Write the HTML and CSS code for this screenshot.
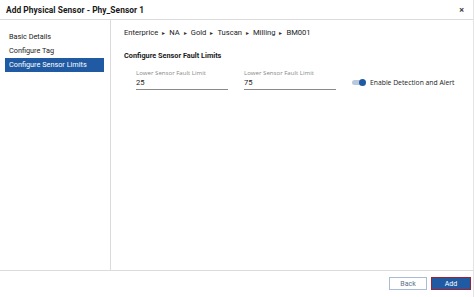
FILE: index.html
```html
<!DOCTYPE html>
<html>
<head>
<meta charset="utf-8">
<link rel="stylesheet" href="styles.css">
</head>
<body>
<div class="dialog">
  <div class="header">
    <span class="title">Add Physical Sensor - Phy_Sensor 1</span>
    <span class="close">×</span>
  </div>
  <div class="body">
    <div class="sidebar">
      <div class="nav-item">Basic Details</div>
      <div class="nav-item">Configure Tag</div>
      <div class="nav-item active">Configure Sensor Limits</div>
    </div>
    <div class="main">
      <div class="crumbs">
        <span>Enterprice</span><span class="arrow">▸</span>
        <span>NA</span><span class="arrow">▸</span>
        <span>Gold</span><span class="arrow">▸</span>
        <span>Tuscan</span><span class="arrow">▸</span>
        <span>Milling</span><span class="arrow">▸</span>
        <span>BM001</span>
      </div>
      <div class="section-title">Configure Sensor Fault Limits</div>
      <div class="fields">
        <div class="field">
          <div class="label">Lower Sensor Fault Limit</div>
          <div class="value">25</div>
        </div>
        <div class="field">
          <div class="label">Lower Sensor Fault Limit</div>
          <div class="value">75</div>
        </div>
        <div class="toggle-row">
          <span class="toggle"><span class="knob"></span></span>
          <span class="toggle-label">Enable Detection and Alert</span>
        </div>
      </div>
    </div>
  </div>
  <div class="footer">
    <button class="btn back">Back</button>
    <button class="btn add">Add</button>
  </div>
</div>
</body>
</html>
```
FILE: styles.css
```css
html, body {
  margin: 0;
  padding: 0;
  background: #fff;
}
.dialog {
  width: 474px;
  height: 297px;
  display: flex;
  flex-direction: column;
  font-family: Roboto, "Liberation Sans", sans-serif;
  color: #222;
  box-sizing: border-box;
  border-right: 1px solid #e4e4e4;
}
.header {
  height: 19px;
  border-bottom: 1px solid #dcdcdc;
  display: flex;
  align-items: center;
  justify-content: space-between;
  padding: 0 9px 0 6px;
  flex: none;
}
.title {
  font-size: 8.4px;
  font-weight: 700;
  color: #1a1a1a;
  letter-spacing: 0.05px;
}
.close {
  font-size: 9px;
  color: #444;
  font-weight: 700;
}
.body {
  flex: 1;
  display: flex;
  min-height: 0;
}
.sidebar {
  width: 105px;
  border-right: 1px solid #dadada;
  padding: 10px 0 0 5px;
  flex: none;
}
.nav-item {
  height: 14px;
  line-height: 14px;
  font-size: 7.3px;
  padding-left: 4px;
  width: 95px;
  color: #222;
}
.nav-item.active {
  background: #1f5aa3;
  color: #fff;
}
.main {
  flex: 1;
  padding: 7px 0 0 13px;
}
.crumbs {
  font-size: 7.6px;
  height: 12px;
  line-height: 12px;
  color: #222;
  display: flex;
  gap: 4px;
}
.arrow {
  font-size: 6px;
  color: #333;
}
.section-title {
  margin-top: 12px;
  font-size: 7.3px;
  font-weight: 700;
  color: #1a1a1a;
  line-height: 10px;
}
.fields {
  display: flex;
  align-items: flex-start;
  margin-top: 8px;
  padding-left: 12px;
}
.field {
  width: 92px;
  margin-right: 16px;
  border-bottom: 1px solid #8a8a8a;
  height: 20px;
}
.label {
  font-family: "Open Sans", sans-serif;
  font-size: 6.1px;
  color: #888;
  line-height: 8px;
}
.value {
  font-size: 7.6px;
  color: #222;
  line-height: 12px;
}
.toggle-row {
  display: flex;
  align-items: center;
  margin-top: 9px;
}
.toggle {
  position: relative;
  width: 13px;
  height: 5px;
  border-radius: 3px;
  background: #b9c9dd;
  display: inline-block;
}
.knob {
  position: absolute;
  right: -1px;
  top: -1px;
  width: 7px;
  height: 7px;
  border-radius: 50%;
  background: #1f5aa3;
}
.toggle-label {
  font-family: "Open Sans", sans-serif;
  font-size: 6.8px;
  color: #222;
  margin-left: 5px;
}
.footer {
  border-top: 1px solid #dcdcdc;
  display: flex;
  justify-content: flex-end;
  align-items: flex-start;
  padding: 6px 2px 0 0;
  gap: 4px;
  flex: none;
  box-sizing: border-box;
  height: 27px;
}
.btn {
  width: 38px;
  height: 13px;
  font-family: Roboto, sans-serif;
  font-size: 7px;
  padding: 0;
  border-radius: 0;
}
.back {
  background: #fff;
  border: 1px solid #a9bcd6;
  color: #5a6f8c;
}
.add {
  width: 40px;
  background: #1f5aa3;
  border: 1px solid #9c2232;
  color: #fff;
}
```
